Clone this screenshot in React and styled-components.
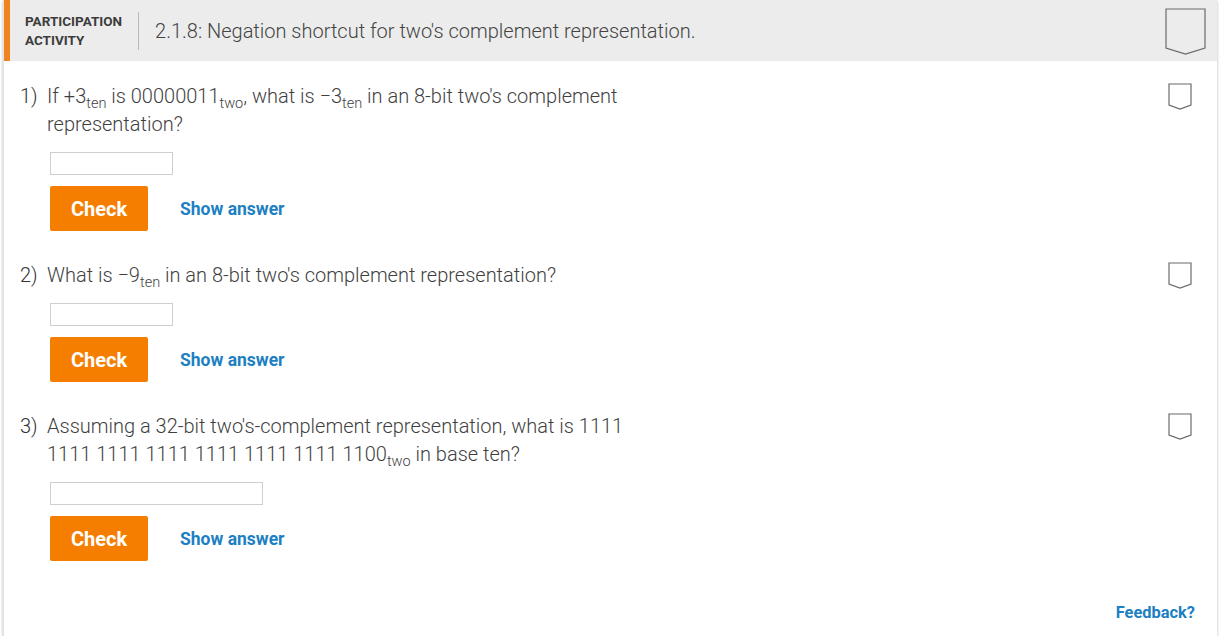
import React from 'react'
import styled, { createGlobalStyle } from 'styled-components'

const GlobalStyle = createGlobalStyle`
    body {
        margin: 0;
        background: #ffffff;
        font-family: Roboto, "Liberation Sans", sans-serif;
    }
`

const Card = styled.section`
    margin: 0 3px 0 3px;
    width: 1214px;
    height: 636px;
    box-sizing: border-box;
    background: #fff;
    border-left: 1px solid #e2e2e2;
    box-shadow: 0 1px 3px rgba(0, 0, 0, 0.28);
    display: flex;
    flex-direction: column;
`

const Header = styled.header`
    height: 61px;
    box-sizing: border-box;
    background: #ececec;
    border-left: 6px solid #f08421;
    display: flex;
    align-items: center;
    padding: 0 11px 0 15px;
`

const Label = styled.div`
    font-size: 13.5px;
    font-weight: 700;
    line-height: 19px;
    color: #3c3c3c;
    padding-right: 16px;
    border-right: 1.5px solid #b9b9b9;
    margin-top: 1px;
`

const Title = styled.h1`
    flex: 1;
    margin: 0 0 0 16px;
    font-size: 20px;
    font-weight: 300;
    color: #444;
`

const Body = styled.div`
    flex: 1;
    display: flex;
    flex-direction: column;
    padding: 21px 20px 0 16px;
`

const Question = styled.div`
    display: grid;
    grid-template-columns: 27px 1fr 24px;
    margin-bottom: 30px;
`

const Num = styled.span`
    font-size: 20px;
    font-weight: 300;
    line-height: 28px;
    color: #333;
`

const Content = styled.div`
    display: flex;
    flex-direction: column;
    align-items: flex-start;
`

const Prompt = styled.p`
    margin: 0;
    max-width: 600px;
    font-size: 20px;
    font-weight: 300;
    line-height: 28px;
    color: #3f3f3f;
`

const Sub = styled.sub`
    font-size: 14.5px;
    line-height: 0;
    vertical-align: -5px;
`

const Answer = styled.input`
    margin: 14px 0 0 3px;
    width: ${({ $wide }) => ($wide ? '213px' : '123px')};
    height: 23px;
    box-sizing: border-box;
    border: 1px solid #cfcfcf;
    outline: none;
`

const Actions = styled.div`
    display: flex;
    align-items: center;
    gap: 32px;
    margin: 11px 0 0 3px;
`

const CheckButton = styled.button`
    width: 98px;
    height: 45px;
    border: none;
    border-radius: 2px;
    background: #f57d00;
    color: #fff;
    font-family: inherit;
    font-size: 20px;
    font-weight: 700;
`

const LinkText = styled.span`
    color: #1c80c2;
    font-size: ${({ $size }) => $size || '17.5px'};
    font-weight: 700;
`

const Footer = styled.div`
    margin-top: auto;
    display: flex;
    justify-content: flex-end;
    padding: 0 2px 14px 0;
`

const Bookmark = ({ w, h, point }) => (
    <svg width={w + 2} height={h + 2} viewBox={`-1 -1 ${w + 2} ${h + 2}`}>
        <path d={`M0 0 H${w} V${h - point} L${w / 2} ${h} L0 ${h - point} Z`} fill="none" stroke="#6a6a6a" strokeWidth="1.2" />
    </svg>
)

const Mark = styled.div`
    padding-top: 1px;
    margin-left: -5px;
`

const HeaderMark = styled.div`
    display: flex;
    margin-top: 1px;
`

function Item({ n, wide, children }) {
    return (
        <Question>
            <Num>{n})</Num>
            <Content>
                <Prompt>{children}</Prompt>
                <Answer type="text" $wide={wide} />
                <Actions>
                    <CheckButton>Check</CheckButton>
                    <LinkText>Show answer</LinkText>
                </Actions>
            </Content>
            <Mark><Bookmark w={22} h={25} point={4} /></Mark>
        </Question>
    )
}

export default function App() {
    return (
        <>
            <GlobalStyle />
            <Card>
                <Header>
                    <Label>PARTICIPATION<br />ACTIVITY</Label>
                    <Title>2.1.8: Negation shortcut for two's complement representation.</Title>
                    <HeaderMark><Bookmark w={39} h={45} point={6} /></HeaderMark>
                </Header>
                <Body>
                    <Item n={1}>
                        If +3<Sub>ten</Sub> is 00000011<Sub>two</Sub>, what is −3<Sub>ten</Sub> in an 8-bit two's complement representation?
                    </Item>
                    <Item n={2}>
                        What is −9<Sub>ten</Sub> in an 8-bit two's complement representation?
                    </Item>
                    <Item n={3} wide>
                        Assuming a 32-bit two's-complement representation, what is 1111 1111 1111 1111 1111 1111 1111 1100<Sub>two</Sub> in base ten?
                    </Item>
                    <Footer>
                        <LinkText $size="16.4px">Feedback?</LinkText>
                    </Footer>
                </Body>
            </Card>
        </>
    )
}
